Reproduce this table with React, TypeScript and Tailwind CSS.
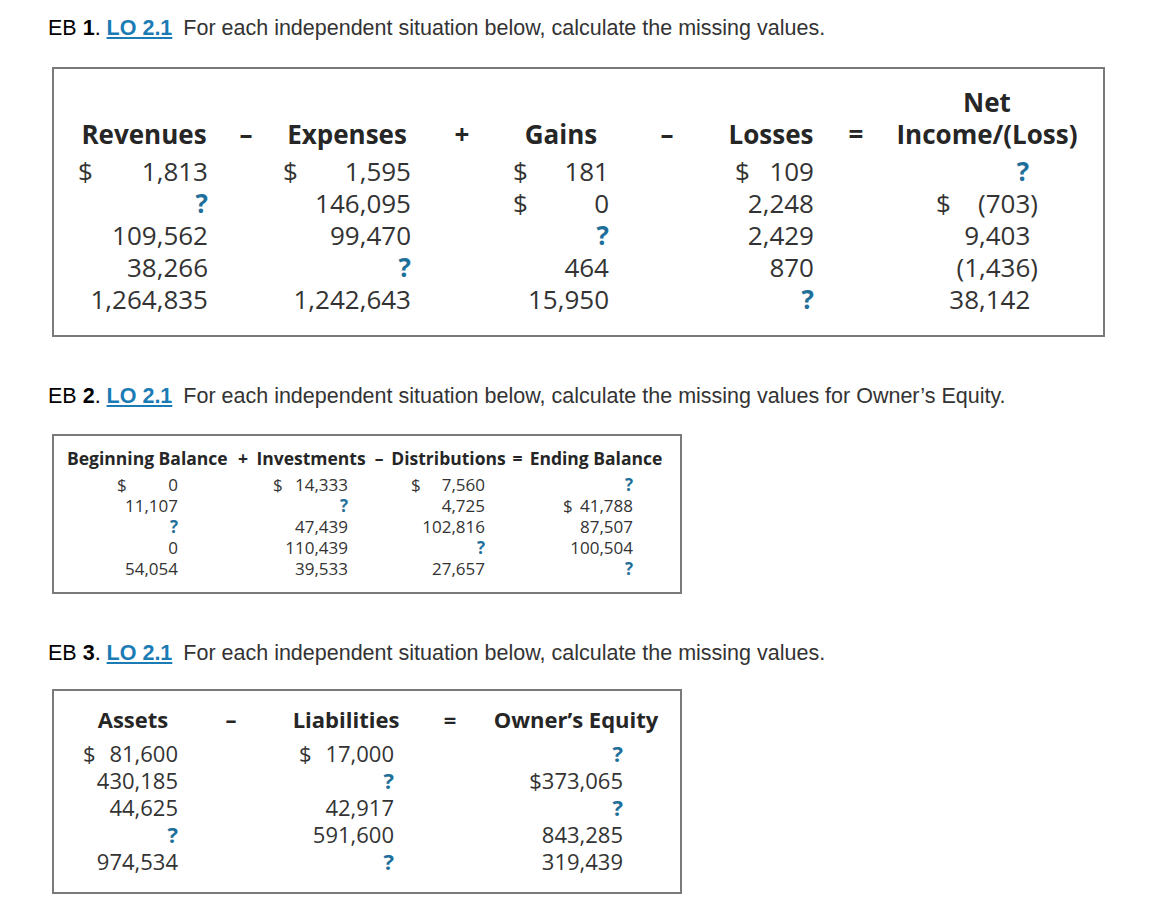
import React from 'react';

type Cell = { v: string; d?: boolean };

const q = (): Cell => ({ v: '?' });
const n = (v: string, d = false): Cell => ({ v, d });

const table1: Cell[][] = [
  [n('1,813', true), n('1,595', true), n('181', true), n('109', true), q()],
  [q(), n('146,095'), n('0', true), n('2,248'), n('(703)', true)],
  [n('109,562'), n('99,470'), q(), n('2,429'), n('9,403')],
  [n('38,266'), q(), n('464'), n('870'), n('(1,436)')],
  [n('1,264,835'), n('1,242,643'), n('15,950'), q(), n('38,142')],
];

const table2: Cell[][] = [
  [n('0', true), n('14,333', true), n('7,560', true), q()],
  [n('11,107'), q(), n('4,725'), n('41,788', true)],
  [q(), n('47,439'), n('102,816'), n('87,507')],
  [n('0'), n('110,439'), q(), n('100,504')],
  [n('54,054'), n('39,533'), n('27,657'), q()],
];

const table3: Cell[][] = [
  [n('81,600', true), n('17,000', true), q()],
  [n('430,185'), q(), n('$373,065')],
  [n('44,625'), n('42,917'), q()],
  [q(), n('591,600'), n('843,285')],
  [n('974,534'), q(), n('319,439')],
];

function Value({ cell, pad, hang }: { cell: Cell; pad: string; hang?: boolean }) {
  const isQ = cell.v === '?';
  return (
    <div className={`flex ${cell.d ? 'justify-between' : 'justify-end'} ${pad}`}>
      {cell.d && <span>$</span>}
      <span className={isQ ? 'font-bold text-[#1f6f9b]' : ''}>
        {cell.v}
        {hang && !cell.v.endsWith(')') && <span className="invisible">)</span>}
      </span>
    </div>
  );
}

function Heading({ num, text }: { num: string; text: string }) {
  return (
    <p className="font-['Liberation_Sans',Arial,sans-serif] text-[21.5px] leading-6 text-[#333]">
      <span className="text-black">
        EB <b>{num}</b>.
      </span>{' '}
      <a className="font-bold text-[#1a7bb5] underline decoration-2 underline-offset-2">LO 2.1</a>
      <span className="ml-[11px]">{text}</span>
    </p>
  );
}

export default function App() {
  const pad1 = ['pl-[2px] pr-[4px]', 'pl-[3px] pr-[3px]', 'pl-[3px] pr-[3px]', 'pl-[13px] pr-[6px]', 'pl-[44px] pr-[44px]'];
  const pad2 = ['pl-[50px] pr-[58px]', 'pl-[23px] pr-[24px]', 'pl-[25px] pr-[26px]', 'pl-[39px] pr-[35px]'];
  const pad3 = ['pl-[3px] pr-[8px]', 'pl-[9px] pr-[8px]', 'pl-[10px] pr-[41px]'];

  return (
    <div className="min-h-[912px] w-[1156px] bg-white pl-12 pt-4">
      <Heading num="1" text="For each independent situation below, calculate the missing values." />

      {/* EB 1 */}
      <div className="ml-1 mt-[27px] w-[1053px] border-2 border-[#7a7a7a] pl-[22px] pt-[17px] pb-[20px] font-['Open_Sans',sans-serif] text-[26px] text-[#333]">
        <div className="grid grid-cols-[136px_68px_134px_96px_102px_110px_98px_72px_190px] items-end whitespace-nowrap font-bold leading-8 text-[#262626]">
          <div className="text-center">Revenues</div>
          <div className="text-center">–</div>
          <div className="text-center">Expenses</div>
          <div className="text-center">+</div>
          <div className="text-center">Gains</div>
          <div className="text-center">–</div>
          <div className="text-center">Losses</div>
          <div className="text-center">=</div>
          <div className="text-center">
            Net
            <br />
            Income/(Loss)
          </div>
        </div>
        <div className="mt-[5px] leading-8">
          {table1.map((row, i) => (
            <div key={i} className="grid grid-cols-[136px_68px_134px_96px_102px_110px_98px_72px_190px]">
              <Value cell={row[0]} pad={pad1[0]} />
              <div />
              <Value cell={row[1]} pad={pad1[1]} />
              <div />
              <Value cell={row[2]} pad={pad1[2]} />
              <div />
              <Value cell={row[3]} pad={pad1[3]} />
              <div />
              <Value cell={row[4]} pad={pad1[4]} hang />
            </div>
          ))}
        </div>
      </div>

      <div className="mt-[47px]">
        <Heading num="2" text="For each independent situation below, calculate the missing values for Owner’s Equity." />
      </div>

      {/* EB 2 */}
      <div className="ml-1 mt-[26px] w-[630px] border-2 border-[#7a7a7a] pl-[13px] pt-[12px] pb-[13px] font-['Open_Sans',sans-serif] text-[17px] leading-[21px] text-[#333]">
        <div className="grid grid-cols-[169px_14px_122px_14px_125px_13px_144px] whitespace-nowrap text-[17.5px] font-bold text-[#262626]">
          <div>Beginning Balance</div>
          <div className="text-center">+</div>
          <div className="text-center">Investments</div>
          <div className="text-center">–</div>
          <div className="text-center">Distributions</div>
          <div className="text-center">=</div>
          <div className="text-center">Ending Balance</div>
        </div>
        <div className="mt-[5px]">
          {table2.map((row, i) => (
            <div key={i} className="grid grid-cols-[169px_14px_122px_14px_125px_13px_144px]">
              <Value cell={row[0]} pad={pad2[0]} />
              <div />
              <Value cell={row[1]} pad={pad2[1]} />
              <div />
              <Value cell={row[2]} pad={pad2[2]} />
              <div />
              <Value cell={row[3]} pad={pad2[3]} />
            </div>
          ))}
        </div>
      </div>

      <div className="mt-[47px]">
        <Heading num="3" text="For each independent situation below, calculate the missing values." />
      </div>

      {/* EB 3 */}
      <div className="ml-1 mt-[24px] w-[630px] border-2 border-[#7a7a7a] pl-[26px] pt-[15px] pb-[17px] font-['Open_Sans',sans-serif] text-[22px] leading-[27px] text-[#333]">
        <div className="grid grid-cols-[106px_104px_112px_86px_176px] whitespace-nowrap font-bold text-[#262626]">
          <div className="text-center">Assets</div>
          <div className="pr-[14px] text-center">–</div>
          <div className="text-center">Liabilities</div>
          <div className="pl-[10px] text-center">=</div>
          <div className="text-center">Owner’s Equity</div>
        </div>
        <div className="mt-[7px]">
          {table3.map((row, i) => (
            <div key={i} className="grid grid-cols-[106px_104px_112px_86px_176px]">
              <Value cell={row[0]} pad={pad3[0]} />
              <div />
              <Value cell={row[1]} pad={pad3[1]} />
              <div />
              <Value cell={row[2]} pad={pad3[2]} />
            </div>
          ))}
        </div>
      </div>
    </div>
  );
}
